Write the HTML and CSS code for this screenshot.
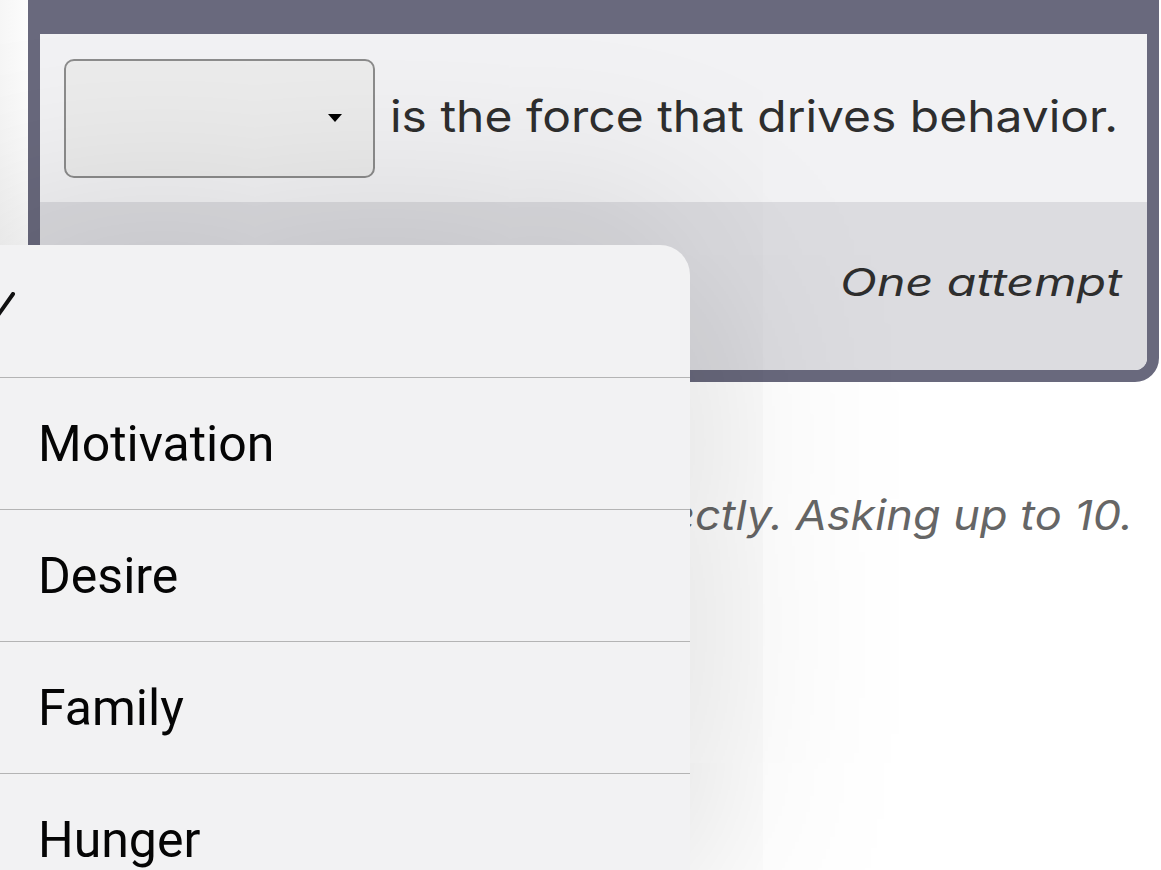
FILE: index.html
```html
<!DOCTYPE html>
<html lang="en">
<head>
    <meta charset="UTF-8">
    <title>Quiz question</title>
    <link rel="stylesheet" href="styles.css">
</head>
<body>
    <div class="page">
        <!-- question card -->
        <div class="card">
            <div class="question">
                <div class="blank-select">
                    <span class="caret"></span>
                </div>
                <span class="question-text">is the force that drives behavior.</span>
            </div>
            <div class="card-footer">
                <span class="attempts">One attempt</span>
            </div>
        </div>
        <div class="progress-note">
            <span class="note-text">Mastery: answer 8 questions correctly. Asking up to 10.</span>
        </div>

        <!-- picker popover for the blank -->
        <div class="picker">
            <div class="picker-row selected">
                <svg class="check" width="40" height="40" viewBox="0 0 40 40">
                    <path d="M2 11 L16 26 L33 2" fill="none" stroke="#111" stroke-width="4" stroke-linecap="round" stroke-linejoin="round"/>
                </svg>
            </div>
            <div class="picker-row">Motivation</div>
            <div class="picker-row">Desire</div>
            <div class="picker-row">Family</div>
            <div class="picker-row">Hunger</div>
        </div>
    </div>
</body>
</html>
```

FILE: styles.css
```css
html, body {
    margin: 0; padding: 0; height: 100%;
    background: #fff;
    overflow: hidden;
}
.page {
    position: relative;
    height: 100%;
    overflow: hidden;
    font-family: Inter, "Liberation Sans", sans-serif;
    background: linear-gradient(90deg, #f6f6f6 0, #fff 40px);
}
/* ----------- card ----------- */
.card {
    margin: 0 2px 0 28px;
    border: 12px solid #69697d;
    border-top-width: 34px;
    border-radius: 0 0 24px 24px;
    overflow: hidden;
}
.question {
    display: flex; align-items: center; gap: 15px;
    height: 168px; box-sizing: border-box;
    padding: 0 24px;
    background: #f2f2f4;
}
.blank-select {
    width: 311px; height: 119px; box-sizing: border-box;
    border: 2px solid #8c8c8c; border-radius: 10px;
    background: #ececec;
    display: flex; align-items: center; justify-content: flex-end;
    padding-right: 31px;
}
.caret {
    width: 0; height: 0;
    border-left: 7px solid transparent;
    border-right: 7px solid transparent;
    border-top: 8px solid #000;
}
/* text in the card is drawn a little wide */
.question-text {
    display: inline-block;
    font-size: 44px; color: #2e2e2e;
    transform: scaleX(1.09); transform-origin: left center;
    margin-top: -4px;
}
.card-footer {
    height: 168px; box-sizing: border-box;
    background: #dcdce0;
    display: flex; justify-content: flex-end;
    padding: 61px 25px 0 0;
}
.attempts {
    display: inline-block;
    font-size: 38px; line-height: 1; font-style: italic; color: #2e2e2e;
    transform: scaleX(1.27); transform-origin: right center;
    height: 38px;
}
.progress-note {
    margin: 113px 28px 0 0;
    text-align: right;
    white-space: nowrap;
}
.note-text {
    display: inline-block;
    font-size: 41px; line-height: 1; font-style: italic; color: #666;
    transform: scaleX(1.1); transform-origin: right center;
}
/* ----------- picker popover ----------- */
.picker {
    position: absolute;
    left: -60px; top: 245px; bottom: 0;
    width: 750px;
    overflow: hidden;
    border-radius: 0 30px 0 0;
    background: #f2f2f3;
    box-shadow: 0 0 220px rgba(0,0,0,0.2);
    font-family: Roboto, "Liberation Sans", sans-serif;
}
.picker-row {
    height: 132px; box-sizing: border-box;
    border-top: 1px solid #b4b4b4;
    display: flex; align-items: center;
    padding-left: 98px;
    font-size: 50px; color: #050505;
}
.picker-row.selected {
    border-top: none;
    position: relative;
}
.check {
    position: absolute;
    left: 40px; top: 47px;
}
```
